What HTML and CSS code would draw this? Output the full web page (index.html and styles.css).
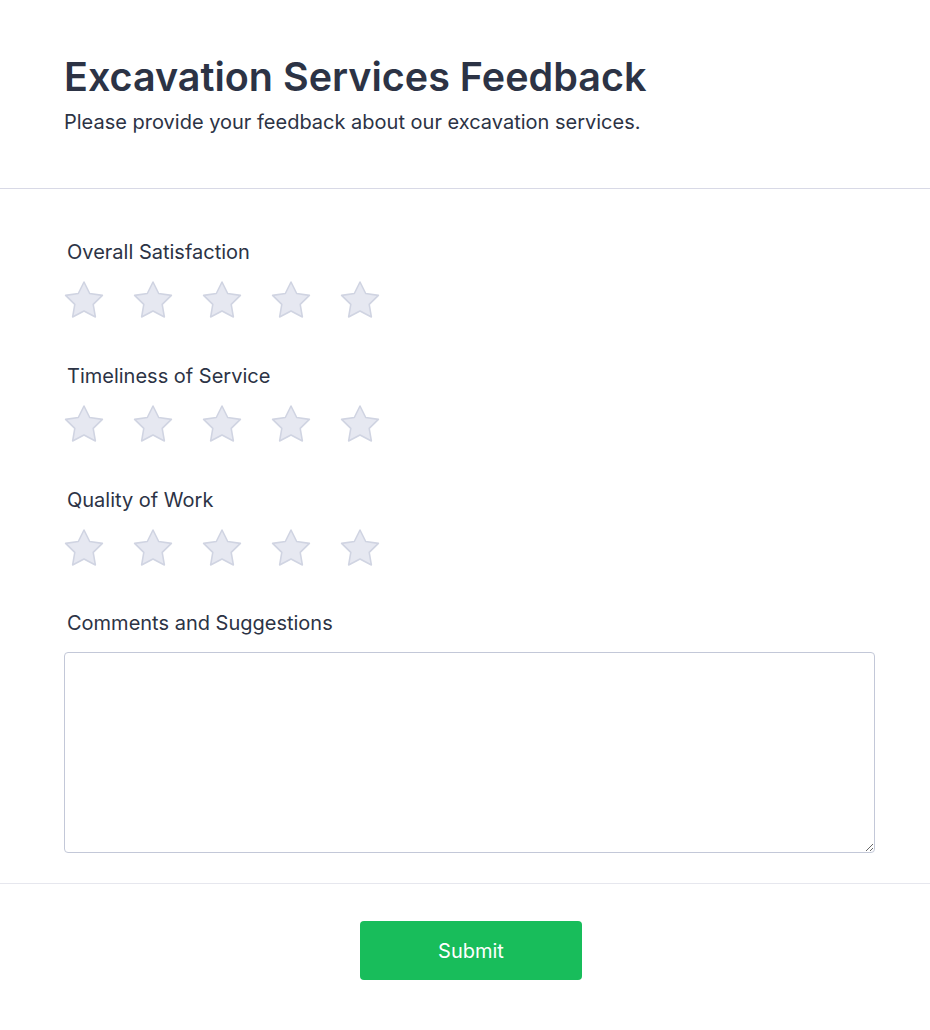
FILE: index.html
```html
<!DOCTYPE html>
<html lang="en">
<head>
<meta charset="utf-8">
<title>Excavation Services Feedback</title>
<link rel="stylesheet" href="styles.css">
</head>
<body>
<form class="form">
  <header class="form-header">
    <h1 class="title">Excavation Services Feedback</h1>
    <p class="subtitle">Please provide your feedback about our excavation services.</p>
  </header>
  <section class="form-body">
    <div class="field">
      <label class="label">Overall Satisfaction</label>
      <div class="stars">
        <svg class="star" viewBox="2 2 20 19.02"><path d="M12 2l3.09 6.26L22 9.27l-5 4.87 1.18 6.88L12 17.77l-6.18 3.25L7 14.14 2 9.27l6.91-1.01L12 2z"/></svg>
        <svg class="star" viewBox="2 2 20 19.02"><path d="M12 2l3.09 6.26L22 9.27l-5 4.87 1.18 6.88L12 17.77l-6.18 3.25L7 14.14 2 9.27l6.91-1.01L12 2z"/></svg>
        <svg class="star" viewBox="2 2 20 19.02"><path d="M12 2l3.09 6.26L22 9.27l-5 4.87 1.18 6.88L12 17.77l-6.18 3.25L7 14.14 2 9.27l6.91-1.01L12 2z"/></svg>
        <svg class="star" viewBox="2 2 20 19.02"><path d="M12 2l3.09 6.26L22 9.27l-5 4.87 1.18 6.88L12 17.77l-6.18 3.25L7 14.14 2 9.27l6.91-1.01L12 2z"/></svg>
        <svg class="star" viewBox="2 2 20 19.02"><path d="M12 2l3.09 6.26L22 9.27l-5 4.87 1.18 6.88L12 17.77l-6.18 3.25L7 14.14 2 9.27l6.91-1.01L12 2z"/></svg>
      </div>
    </div>
    <div class="field">
      <label class="label">Timeliness of Service</label>
      <div class="stars">
        <svg class="star" viewBox="2 2 20 19.02"><path d="M12 2l3.09 6.26L22 9.27l-5 4.87 1.18 6.88L12 17.77l-6.18 3.25L7 14.14 2 9.27l6.91-1.01L12 2z"/></svg>
        <svg class="star" viewBox="2 2 20 19.02"><path d="M12 2l3.09 6.26L22 9.27l-5 4.87 1.18 6.88L12 17.77l-6.18 3.25L7 14.14 2 9.27l6.91-1.01L12 2z"/></svg>
        <svg class="star" viewBox="2 2 20 19.02"><path d="M12 2l3.09 6.26L22 9.27l-5 4.87 1.18 6.88L12 17.77l-6.18 3.25L7 14.14 2 9.27l6.91-1.01L12 2z"/></svg>
        <svg class="star" viewBox="2 2 20 19.02"><path d="M12 2l3.09 6.26L22 9.27l-5 4.87 1.18 6.88L12 17.77l-6.18 3.25L7 14.14 2 9.27l6.91-1.01L12 2z"/></svg>
        <svg class="star" viewBox="2 2 20 19.02"><path d="M12 2l3.09 6.26L22 9.27l-5 4.87 1.18 6.88L12 17.77l-6.18 3.25L7 14.14 2 9.27l6.91-1.01L12 2z"/></svg>
      </div>
    </div>
    <div class="field field-last-rating">
      <label class="label">Quality of Work</label>
      <div class="stars">
        <svg class="star" viewBox="2 2 20 19.02"><path d="M12 2l3.09 6.26L22 9.27l-5 4.87 1.18 6.88L12 17.77l-6.18 3.25L7 14.14 2 9.27l6.91-1.01L12 2z"/></svg>
        <svg class="star" viewBox="2 2 20 19.02"><path d="M12 2l3.09 6.26L22 9.27l-5 4.87 1.18 6.88L12 17.77l-6.18 3.25L7 14.14 2 9.27l6.91-1.01L12 2z"/></svg>
        <svg class="star" viewBox="2 2 20 19.02"><path d="M12 2l3.09 6.26L22 9.27l-5 4.87 1.18 6.88L12 17.77l-6.18 3.25L7 14.14 2 9.27l6.91-1.01L12 2z"/></svg>
        <svg class="star" viewBox="2 2 20 19.02"><path d="M12 2l3.09 6.26L22 9.27l-5 4.87 1.18 6.88L12 17.77l-6.18 3.25L7 14.14 2 9.27l6.91-1.01L12 2z"/></svg>
        <svg class="star" viewBox="2 2 20 19.02"><path d="M12 2l3.09 6.26L22 9.27l-5 4.87 1.18 6.88L12 17.77l-6.18 3.25L7 14.14 2 9.27l6.91-1.01L12 2z"/></svg>
      </div>
    </div>
    <div class="field field-comments">
      <label class="label">Comments and Suggestions</label>
      <textarea class="comments"></textarea>
    </div>
  </section>
  <footer class="form-footer">
    <button type="button" class="submit">Submit</button>
  </footer>
</form>
</body>
</html>
```

FILE: styles.css
```css
html, body {
  margin: 0;
  padding: 0;
  background: #ffffff;
}

body {
  font-family: Inter, "Noto Sans", sans-serif;
  color: #2c3345;
}

.form {
  width: 930px;
}

.form-header {
  padding: 53px 64px 0;
  height: 135px;
  border-bottom: 1px solid #d8d9e6;
}

.title {
  margin: 0;
  font-size: 39.5px;
  line-height: 48px;
  font-weight: 600;
  color: #2c3345;
}

.subtitle {
  margin: 8px 0 0;
  font-size: 20px;
  line-height: 26px;
  font-weight: 400;
  color: #2c3345;
}

.form-body {
  padding: 50px 64px 30px;
  border-bottom: 1px solid #e6e7ee;
}

.field {
  display: flex;
  flex-direction: column;
  margin-bottom: 44px;
}

.field-last-rating {
  margin-bottom: 43px;
}

.field-comments {
  margin-bottom: 0;
}

.label {
  padding-left: 3px;
  font-size: 20px;
  line-height: 26px;
  font-weight: 400;
  color: #2c3345;
}

.stars {
  display: flex;
  gap: 31px;
  margin-top: 17px;
  height: 37px;
  padding-left: 1px;
}

.star {
  width: 38px;
  height: 35px;
  overflow: visible;
}

.star path {
  fill: #e6e8f1;
  stroke: #d0d4e2;
  stroke-width: 0.85;
  stroke-linejoin: round;
}

.comments {
  margin-top: 16px;
  width: 811px;
  height: 201px;
  box-sizing: border-box;
  border: 1px solid #c3c8d8;
  border-radius: 4px;
  resize: vertical;
  font-family: Inter, sans-serif;
  font-size: 16px;
}

.form-footer {
  display: flex;
  justify-content: center;
  padding: 37px 0 50px 12px;
}

.submit {
  width: 222px;
  height: 59px;
  border: none;
  border-radius: 4px;
  background: #18bd5b;
  color: #ffffff;
  font-family: Inter, sans-serif;
  font-size: 20px;
  font-weight: 400;
}
```
